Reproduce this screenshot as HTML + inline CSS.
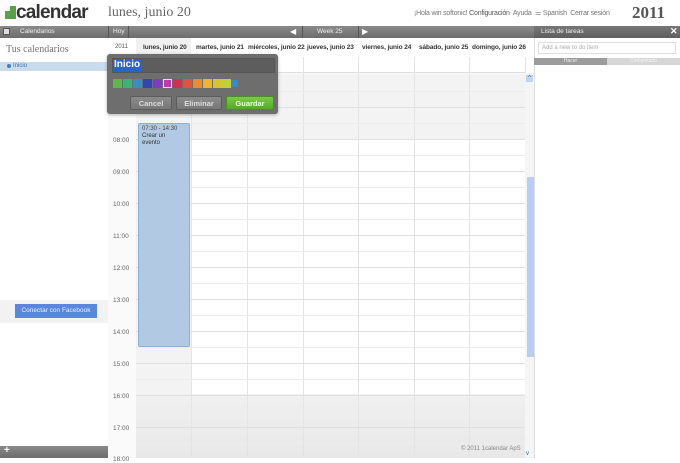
<!DOCTYPE html>
<html><head><meta charset="utf-8"><style>
*{margin:0;padding:0;box-sizing:border-box}
body{width:680px;height:458px;overflow:hidden;background:#fff;font-family:"Liberation Sans",sans-serif;position:relative;font-size:7px;color:#333}
.a{position:absolute}
.bar{background:linear-gradient(#8a8a8a,#6c6c6c);color:#eee}
.hl{position:absolute;left:136px;width:389px;height:1px;background:#ececec}
.hl.h{background:#e0e0e0}
.vl{position:absolute;top:57px;width:1px;height:401px;background:#e4e4e4}
.tl{position:absolute;left:113px;font-size:6.5px;color:#666}
.dh{position:absolute;top:44px;font-size:6.5px;color:#333;font-weight:bold;letter-spacing:-.1px}
.sw{position:absolute;top:79px;width:9px;height:9px}
.btn{position:absolute;top:96px;height:14px;border-radius:2px;font-size:7.5px;font-weight:bold;text-align:center;line-height:14px}
</style></head><body>
<!-- header -->
<div class="a" style="left:5px;top:6px;width:11px;height:13px;background:#5aa04a"></div>
<div class="a" style="left:5px;top:6px;width:5px;height:5px;background:#fff"></div>
<div class="a" style="left:16px;top:1px;font-size:19px;font-weight:bold;color:#333;letter-spacing:-.8px;line-height:24px">calendar</div>
<div class="a" style="left:108px;top:5px;font-family:'Liberation Serif',serif;font-size:14px;color:#666">lunes, junio 20</div>
<div class="a" style="left:414px;top:9px;font-size:7px;color:#777;letter-spacing:-.2px">¡Hola win softonic! <span style="color:#555">Configuración</span>&nbsp; Ayuda &nbsp;⚌ Spanish&nbsp; Cerrar sesión</div>
<div class="a" style="left:632px;top:3px;font-family:'Liberation Serif',serif;font-size:17px;font-weight:bold;color:#555">2011</div>
<!-- dark bar -->
<div class="a bar" style="left:0;top:26px;width:680px;height:12px"></div>
<div class="a" style="left:3px;top:28px;width:7px;height:7px;background:#ddd;border:1px solid #555"></div>
<div class="a" style="left:20px;top:28px;color:#eee;font-size:6.5px">Calendarios</div>
<div class="a" style="left:108px;top:26px;width:1px;height:12px;background:#555"></div>
<div class="a" style="left:113px;top:28px;color:#eee;font-size:6.5px">Hoy</div>
<div class="a" style="left:128px;top:26px;width:1px;height:12px;background:#555"></div>
<div class="a" style="left:290px;top:27px;color:#fff;font-size:8px">◀</div>
<div class="a" style="left:302px;top:26px;width:1px;height:12px;background:#555"></div>
<div class="a" style="left:317px;top:28px;color:#eee;font-size:6.5px">Week 25</div>
<div class="a" style="left:358px;top:26px;width:1px;height:12px;background:#555"></div>
<div class="a" style="left:362px;top:27px;color:#fff;font-size:8px">▶</div>
<div class="a" style="left:534px;top:26px;width:146px;height:12px;background:linear-gradient(#777,#5e5e5e)"></div>
<div class="a" style="left:541px;top:28px;color:#eee;font-size:6.5px">Lista de tareas</div>
<div class="a" style="left:670px;top:26px;color:#fff;font-size:9px;font-weight:bold">✕</div>
<!-- sidebar -->
<div class="a" style="left:6px;top:44px;font-family:'Liberation Serif',serif;font-size:10px;color:#777">Tus calendarios</div>
<div class="a" style="left:0;top:62px;width:108px;height:9px;background:#c9dced"></div>
<div class="a" style="left:7px;top:64px;width:4px;height:4px;border-radius:2px;background:#3d7fc0"></div>
<div class="a" style="left:13px;top:63px;font-size:6px;color:#3d6fa0">Inicio</div>
<div class="a" style="left:0;top:300px;width:108px;height:23px;background:#f2f2f2"></div>
<div class="a" style="left:15px;top:304px;width:82px;height:14px;background:#5b86e0;color:#e8f0ff;font-size:6.5px;text-align:center;line-height:14px">Conectar con Facebook</div>
<div class="a bar" style="left:0;top:446px;width:108px;height:12px"></div>
<div class="a" style="left:4px;top:445px;color:#fff;font-size:10px;font-weight:bold">+</div>
<!-- calendar area -->
<div class="a" style="left:108px;top:38px;width:417px;height:420px;background:#fafafa"></div>
<div class="a" style="left:136px;top:38px;width:55px;height:420px;background:#f3f3f3"></div>
<div class="a" style="left:108px;top:38px;width:417px;height:19px;background:#fff"></div>
<div class="a" style="left:136px;top:38px;width:55px;height:19px;background:#f0f0f0"></div>
<div class="a" style="left:136px;top:57px;width:389px;height:16px;background:#fff;border-bottom:1px solid #ddd"></div>
<div class="a" style="left:136px;top:74px;width:389px;height:65px;background:#f3f3f3"></div>
<div class="a" style="left:191px;top:139px;width:334px;height:255px;background:#fff"></div>
<div class="a" style="left:136px;top:394px;width:389px;height:64px;background:linear-gradient(#f0f0f0,#e8e8e8)"></div>
<div class="a" style="left:115px;top:44px;font-size:6px;color:#555">2011</div>
<div class="dh" style="left:143px">lunes, junio 20</div>
<div class="dh" style="left:196px">martes, junio 21</div>
<div class="dh" style="left:248px">miércoles, junio 22</div>
<div class="dh" style="left:307px">jueves, junio 23</div>
<div class="dh" style="left:362px">viernes, junio 24</div>
<div class="dh" style="left:419px">sábado, junio 25</div>
<div class="dh" style="left:472px">domingo, junio 26</div>
<div class="vl" style="left:191px"></div><div class="vl" style="left:247px"></div><div class="vl" style="left:303px"></div><div class="vl" style="left:358px"></div><div class="vl" style="left:414px"></div><div class="vl" style="left:469px"></div><div class="vl" style="left:525px"></div>
<div class="hl" style="top:91px"></div><div class="hl h" style="top:107px"></div><div class="hl" style="top:123px"></div>
<div class="hl h" style="top:139px"></div><div class="hl" style="top:155px"></div>
<div class="hl h" style="top:171px"></div><div class="hl" style="top:187px"></div>
<div class="hl h" style="top:203px"></div><div class="hl" style="top:219px"></div>
<div class="hl h" style="top:235px"></div><div class="hl" style="top:251px"></div>
<div class="hl h" style="top:267px"></div><div class="hl" style="top:283px"></div>
<div class="hl h" style="top:299px"></div><div class="hl" style="top:315px"></div>
<div class="hl h" style="top:331px"></div><div class="hl" style="top:347px"></div>
<div class="hl h" style="top:363px"></div><div class="hl" style="top:379px"></div>
<div class="hl h" style="top:395px"></div><div class="hl" style="top:411px"></div>
<div class="hl h" style="top:427px"></div><div class="hl" style="top:443px"></div>
<div class="tl" style="top:137px">08:00</div><div class="tl" style="top:169px">09:00</div><div class="tl" style="top:201px">10:00</div><div class="tl" style="top:233px">11:00</div><div class="tl" style="top:265px">12:00</div><div class="tl" style="top:297px">13:00</div><div class="tl" style="top:329px">14:00</div><div class="tl" style="top:361px">15:00</div><div class="tl" style="top:393px">16:00</div><div class="tl" style="top:425px">17:00</div><div class="tl" style="top:456px">18:00</div>
<!-- event -->
<div class="a" style="left:138px;top:123px;width:52px;height:224px;background:#b1c9e2;border:1px solid #8eb0d3;border-radius:2px;font-size:6px;color:#445;padding:2px 3px;line-height:7px">07:30 - 14:30<br><span style="color:#333;display:inline-block;width:30px">Crear un evento</span></div>
<!-- scrollbar -->
<div class="a" style="left:525px;top:73px;width:9px;height:385px;background:#f5f5f5"></div>
<div class="a" style="left:526px;top:75px;width:7px;height:7px;background:#c0d4ee;color:#2f5fa0;font-size:6px;text-align:center;line-height:7px">^</div>
<div class="a" style="left:527px;top:177px;width:7px;height:180px;background:#b8cdf4"></div>
<div class="a" style="left:526px;top:451px;width:7px;height:7px;color:#2f5fa0;font-size:6px">v</div>
<div class="a" style="left:461px;top:446px;font-size:6px;color:#888">© 2011 1calendar ApS</div>
<!-- right panel -->
<div class="a" style="left:534px;top:38px;width:146px;height:420px;background:#fff;border-left:1px solid #ddd"></div>
<div class="a" style="left:538px;top:42px;width:138px;height:12px;border:1px solid #ddd;font-size:6px;color:#aaa;padding:2px 3px">Add a new to do item</div>
<div class="a" style="left:534px;top:58px;width:73px;height:7px;background:#9c9c9c;color:#eee;font-size:5px;text-align:center;line-height:7px">Hacer</div>
<div class="a" style="left:607px;top:58px;width:73px;height:7px;background:#d6d6d6;color:#f4f4f4;font-size:5px;text-align:center;line-height:7px">Completado</div>
<!-- popup -->
<div class="a" style="left:103px;top:62px;width:0;height:0;border:4px solid transparent;border-right-color:#666"></div>
<div class="a" style="left:107px;top:54px;width:171px;height:60px;background:#6e6e6e;border-radius:3px;box-shadow:0 1px 3px rgba(0,0,0,.3)"></div>
<div class="a" style="left:112px;top:58px;width:163px;height:15px;background:#5d5d5d;border:1px solid #555"></div>
<div class="a" style="left:113px;top:59px;height:12px;background:#2a64c8;color:#fff;font-size:10px;font-weight:bold;line-height:12px;padding:0 1px">Inicio</div>
<div class="sw" style="left:113px;background:#5cb848"></div>
<div class="sw" style="left:123px;background:#36b676"></div>
<div class="sw" style="left:133px;background:#3a8ec6"></div>
<div class="sw" style="left:143px;background:#3146b4"></div>
<div class="sw" style="left:153px;background:#7b3ec0"></div>
<div class="sw" style="left:163px;background:#c236b4;border:1px solid #f0d0f0"></div>
<div class="sw" style="left:173px;background:#d32f4e"></div>
<div class="sw" style="left:183px;background:#e2533a"></div>
<div class="sw" style="left:193px;background:#ec8b30"></div>
<div class="sw" style="left:203px;background:#efb42f"></div>
<div class="sw" style="left:213px;background:#d7c52f"></div>
<div class="sw" style="left:222px;background:#c3cf36"></div>
<div class="sw" style="left:231px;top:80px;width:7px;height:7px;background:#3a86cf"></div>
<div class="btn" style="left:130px;width:42px;background:linear-gradient(#8b8b8b,#777);color:#ddd;border:1px solid #5c5c5c">Cancel</div>
<div class="btn" style="left:176px;width:46px;background:linear-gradient(#8b8b8b,#777);color:#ddd;border:1px solid #5c5c5c">Eliminar</div>
<div class="btn" style="left:226px;width:48px;background:linear-gradient(#7cc84a,#55a82a);color:#eaffd8;border:1px solid #4b8f26">Guardar</div>
</body></html>
